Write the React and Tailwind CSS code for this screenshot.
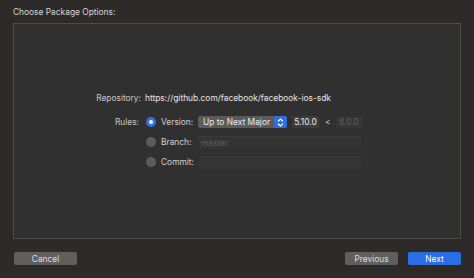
import React from 'react';

const font = { fontFamily: 'Inter, "Noto Sans", sans-serif' };

const Radio = ({ checked }) =>
  checked ? (
    <span className="flex h-[10px] w-[10px] shrink-0 items-center justify-center rounded-full bg-[#2f6fe0]">
      <span className="h-[4px] w-[4px] rounded-full bg-white" />
    </span>
  ) : (
    <span className="h-[10px] w-[10px] shrink-0 rounded-full bg-[#5c5c5c]" />
  );

const RuleRow = ({ label, checked, children }) => (
  <div className="flex h-[20px] items-center pl-[132px]">
    <Radio checked={checked} />
    <span className="ml-[5px] w-[37px] whitespace-nowrap text-[#d0d0d0]">{label}</span>
    {children}
  </div>
);

export default function App() {
  return (
    <div className="flex h-[278px] w-[474px] flex-col bg-[#2c2b29] text-[8.4px] leading-none" style={font}>
      <div className="pl-[13px] pt-[8px] text-[#d6d6d6]">Choose Package Options:</div>

      <div className="mx-[13px] mt-[7px] h-[216px] border border-[#4c4c4a] bg-[#303030] pt-[64px]">
        <div className="flex h-[20px] items-center">
          <div className="w-[127px] text-right text-[#c8c8c8]">Repository:</div>
          <div className="ml-[4px] whitespace-nowrap text-[#e6e6e6]">https://github.com/facebook/facebook-ios-sdk</div>
        </div>

        <div className="relative mt-[4px]">
          <div className="absolute right-[321px] top-[6px] text-[#c8c8c8]">Rules:</div>
          <RuleRow label="Version:" checked>
            <div className="flex h-[12px] w-[89px] items-center rounded-[2px] bg-[#5b5b5b]">
              <span className="flex-1 whitespace-nowrap pl-[5px] text-[#ececec]">Up to Next Major</span>
              <span className="flex h-[12px] w-[13px] items-center justify-center rounded-[2px] bg-[#2f6fe0]">
                <svg width="7" height="9" viewBox="0 0 7 9" fill="none" stroke="white" strokeWidth="1.2">
                  <path d="M1 3.2 L3.5 1 L6 3.2" />
                  <path d="M1 5.8 L3.5 8 L6 5.8" />
                </svg>
              </span>
            </div>
            <div className="ml-[5px] flex h-[12px] w-[27px] items-center justify-center bg-[#3c3c3c] text-[#ececec]">5.10.0</div>
            <span className="ml-[6px] text-[#cfcfcf]">&lt;</span>
            <div className="ml-[5px] flex h-[12px] w-[27px] items-center justify-center bg-[#353535] text-[#5e5e5e]">6.0.0</div>
          </RuleRow>
          <RuleRow label="Branch:">
            <div className="flex h-[13px] w-[163px] items-center border-t border-[#3a3a3a] bg-[#343434] pl-[3px] text-[#5c5c5c]">master</div>
          </RuleRow>
          <RuleRow label="Commit:">
            <div className="h-[13px] w-[163px] border-t border-[#3a3a3a] bg-[#343434]" />
          </RuleRow>
        </div>
      </div>

      <div className="mt-[13px] flex pl-[14px] pr-[13px]">
        <button className="flex h-[13px] w-[63px] items-center justify-center rounded-[2px] bg-[#5f5f5f] text-[#dedede]">Cancel</button>
        <div className="flex-1" />
        <button className="flex h-[13px] w-[53px] items-center justify-center rounded-[2px] bg-[#5f5f5f] text-[#dedede]">Previous</button>
        <button className="ml-[10px] flex h-[13px] w-[53px] items-center justify-center rounded-[2px] bg-[#2a6ee3] text-white">Next</button>
      </div>
    </div>
  );
}
